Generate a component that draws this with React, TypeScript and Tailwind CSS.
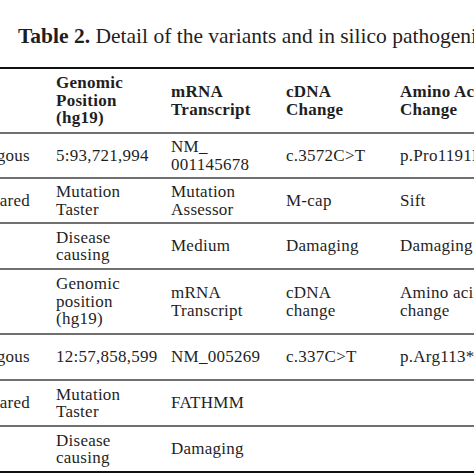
import React from 'react';

type Row = {
  cells: string[][];
  height: string;
  bold?: boolean;
  last?: boolean;
};

// Each cell is a list of lines; first column is cut off on the left in the source.
const rows: Row[] = [
  {
    height: 'h-[65px]',
    bold: true,
    cells: [[], ['Genomic', 'Position', '(hg19)'], ['mRNA', 'Transcript'], ['cDNA', 'Change'], ['Amino Acid', 'Change']],
  },
  {
    height: 'h-[45px]',
    cells: [['Homozygous'], ['5:93,721,994'], ['NM_', '001145678'], ['c.3572C>T'], ['p.Pro1191Leu']],
  },
  {
    height: 'h-[45px]',
    cells: [['Unshared'], ['Mutation', 'Taster'], ['Mutation', 'Assessor'], ['M-cap'], ['Sift']],
  },
  {
    height: 'h-[46px]',
    cells: [[], ['Disease', 'causing'], ['Medium'], ['Damaging'], ['Damaging']],
  },
  {
    height: 'h-[65px]',
    cells: [[], ['Genomic', 'position', '(hg19)'], ['mRNA', 'Transcript'], ['cDNA', 'change'], ['Amino acid', 'change']],
  },
  {
    height: 'h-[46px]',
    cells: [['Heterozygous'], ['12:57,858,599'], ['NM_005269'], ['c.337C>T'], ['p.Arg113*']],
  },
  {
    height: 'h-[46px]',
    cells: [['Unshared'], ['Mutation', 'Taster'], ['FATHMM'], [], []],
  },
  {
    height: 'h-[46px]',
    last: true,
    cells: [[], ['Disease', 'causing'], ['Damaging'], [], []],
  },
];

function Cell({ lines, first }: { lines: string[]; first?: boolean }) {
  return (
    <div className={first ? 'flex justify-end pr-[26px] whitespace-nowrap' : 'flex flex-col whitespace-nowrap'}>
      {lines.map((line, i) => (
        <span key={i} className="block">
          {line}
        </span>
      ))}
    </div>
  );
}

export default function App() {
  return (
    <div
      className="w-[474px] h-[474px] overflow-hidden bg-white text-[#1f1f1f]"
      style={{ fontFamily: '"Liberation Serif", "Times New Roman", serif' }}
    >
      <div className="pt-[24px] pl-[18px] text-[21.5px] leading-[24px] whitespace-nowrap">
        <span className="font-bold">Table 2.</span> Detail of the variants and in silico pathogenicity prediction.
      </div>

      <div className="mt-[19px] border-t-2 border-[#111]">
        {rows.map((row, idx) => (
          <div
            key={idx}
            className={`grid grid-cols-[56px_115px_115px_114px_1fr] items-center text-[17px] leading-[17.5px] tracking-[0.015em] ${row.height} ${
              row.last ? 'border-b-2 border-[#111]' : 'border-b-2 border-[#707070]'
            } ${row.bold ? 'font-bold' : ''}`}
          >
            {row.cells.map((lines, c) => (
              <Cell key={c} lines={lines} first={c === 0} />
            ))}
          </div>
        ))}
      </div>
    </div>
  );
}
